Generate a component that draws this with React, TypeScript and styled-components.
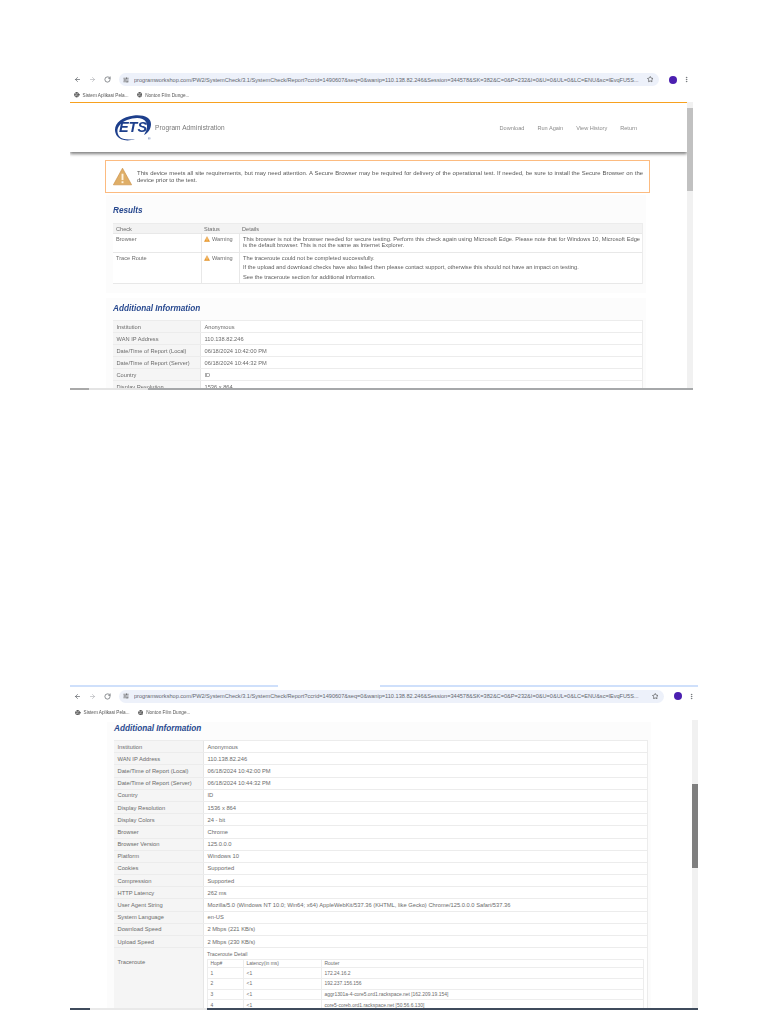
import styled, {createGlobalStyle} from "styled-components";
import {ArrowLeft, ArrowRight, EllipsisVertical, Globe, RotateCw, SlidersHorizontal, Star} from "lucide-react";

const GlobalStyle = createGlobalStyle`
    html, body {
        margin: 0;
        background: #ffffff;
        font-family: "Liberation Sans", Arial, sans-serif;
    }
`;

const Page = styled.div`
    width: 768px;
    height: 1024px;
    overflow: hidden;
    box-sizing: border-box;
    padding: 71px 0 0 70px;
    display: flex;
    flex-direction: column;
    gap: 295px;
`;

const Shot = styled.section<{$width: number; $height: number}>`
    width: ${(p) => p.$width}px;
    height: ${(p) => p.$height}px;
    display: flex;
    flex-direction: column;
    overflow: hidden;
    filter: blur(0.3px);
`;

const TopGlow = styled.div`
    height: 2px;
    flex: none;
    background: linear-gradient(90deg, #cfe0fb 0 208px, #fff 208px 310px, #cfe0fb 310px);
`;

const Toolbar = styled.div<{$height: number}>`
    height: ${(p) => p.$height}px;
    flex: none;
    display: flex;
    align-items: center;
    padding-left: 4px;
    gap: 8px;
    color: #5f6368;
`;

const UrlBar = styled.div`
    flex: 1;
    height: 13px;
    border-radius: 7px;
    background: #edf1fa;
    display: flex;
    align-items: center;
    padding: 0 6px 0 4px;
    gap: 5px;
    min-width: 0;
`;

const UrlText = styled.span`
    flex: 1;
    font-size: 5.6px;
    color: #63676e;
    white-space: nowrap;
    overflow: hidden;
`;

const Avatar = styled.div`
    width: 8px;
    height: 8px;
    border-radius: 50%;
    background: #4b1fb0;
    flex: none;
    margin-left: 2px;
`;

const Bookmarks = styled.div<{$height: number; $left: number}>`
    height: ${(p) => p.$height}px;
    flex: none;
    display: flex;
    align-items: center;
    gap: 8px;
    padding-left: ${(p) => p.$left}px;
`;

const Bookmark = styled.span`
    display: flex;
    align-items: center;
    gap: 3px;
    font-size: 4.7px;
    color: #555;
`;

const Viewport = styled.div`
    flex: 1;
    min-height: 0;
    display: flex;
`;

const Content = styled.div`
    flex: 1;
    min-width: 0;
    overflow: hidden;
    display: flex;
    flex-direction: column;
`;

const Scrollbar = styled.div<{$before: number; $thumb: number; $color: string}>`
    width: 6px;
    flex: none;
    background: #f1f1f1;
    display: flex;
    flex-direction: column;
    align-items: center;
    &::before {
        content: "";
        height: ${(p) => p.$before}px;
    }
    &::after {
        content: "";
        width: 6px;
        height: ${(p) => p.$thumb}px;
        background: ${(p) => p.$color};
    }
`;

const BottomLine = styled.div<{$dark: boolean}>`
    height: 2px;
    flex: none;
    background: ${(p) => p.$dark
        ? "linear-gradient(90deg, #3f4b5c 0 20px, #e9e9e9 20px 137px, #3f4b5c 137px)"
        : "linear-gradient(90deg, #a9a9a9 0 19px, #e4e4e4 19px 78px, #a6a8aa 78px)"};
`;

const Header = styled.header`
    height: 50px;
    flex: none;
    box-sizing: border-box;
    border-top: 1px solid #f7a11f;
    display: flex;
    align-items: center;
    padding: 0 50px 0 43px;
    box-shadow: 0 2px 3px rgba(0, 0, 0, 0.5);
    position: relative;
`;

const Brand = styled.span`
    font-size: 6.5px;
    color: #777;
    letter-spacing: 0.1px;
    margin-left: 2px;
`;

const Nav = styled.nav`
    margin-left: auto;
    display: flex;
    gap: 13px;
    font-size: 5.6px;
    color: #8b8b8b;
`;

const Alert = styled.div`
    flex: none;
    width: 545px;
    height: 33px;
    box-sizing: border-box;
    margin: 8px 0 0 35px;
    box-shadow: inset 0 0 0 1px #fcbb80;
    display: flex;
    align-items: center;
    padding: 0 7px 0 8px;
    gap: 5px;
    font-size: 5.95px;
    line-height: 7px;
    color: #565656;
    text-align: justify;
`;

const Card = styled.div<{$top: number; $height?: number; $left: number; $width: number}>`
    flex: none;
    margin: ${(p) => p.$top}px 0 0 ${(p) => p.$left}px;
    width: ${(p) => p.$width}px;
    ${(p) => p.$height ? `height: ${p.$height}px;` : ""}
    box-sizing: border-box;
    background: #fcfcfc;
    padding: 0 3px 0 7px;
`;

const SectionTitle = styled.h2<{$height: number; $pad: number}>`
    margin: 0;
    height: ${(p) => p.$height}px;
    box-sizing: border-box;
    padding-bottom: ${(p) => p.$pad}px;
    display: flex;
    align-items: flex-end;
    font-size: 8.2px;
    line-height: 9px;
    font-style: italic;
    font-weight: 700;
    color: #28498f;
`;

const Grid = styled.div`
    color: #6b6b6b;
    border-top: 1px solid #ececec;
    border-right: 1px solid #ececec;
    background: #fff;
`;

const ResultRow = styled.div<{$height: number; $head?: boolean}>`
    display: grid;
    grid-template-columns: 88px 38px 1fr;
    height: ${(p) => p.$height}px;
    box-sizing: border-box;
    font-size: 5.6px;
    border-bottom: 1px solid #e8e8e8;
    background: ${(p) => p.$head ? "#f3f3f3" : "#fff"};
`;

const ResultCell = styled.div<{$line?: boolean}>`
    padding: 1.5px 2px 0 3px;
    line-height: 6.3px;
    ${(p) => p.$line ? "border-left: 1px solid #e8e8e8;" : ""}
`;

const DetailLine = styled.p`
    margin: 0 0 3.6px;
    color: #5d5d5d;
    font-size: 5.72px;
    line-height: 6.2px;
    text-align: justify;
`;

const WarnStatus = styled.span`
    display: flex;
    align-items: center;
    gap: 2px;
    white-space: nowrap;
    margin-left: -1px;
`;

const InfoRow = styled.div<{$height: number; $first: number; $size: number}>`
    display: grid;
    grid-template-columns: ${(p) => p.$first}px 1fr;
    height: ${(p) => p.$height}px;
    box-sizing: border-box;
    font-size: ${(p) => p.$size}px;
    border-bottom: 1px solid #ececec;
`;

const InfoKey = styled.div`
    background: #f5f5f5;
    padding-left: 3.5px;
    display: flex;
    align-items: center;
    border-right: 1px solid #e6e6e6;
    white-space: nowrap;
`;

const InfoValue = styled.div`
    padding-left: 3.5px;
    display: flex;
    align-items: center;
    white-space: nowrap;
`;

const TraceRow = styled.div`
    display: grid;
    grid-template-columns: 90px 1fr;
    height: 70px;
    font-size: 5.78px;
`;

const TraceKey = styled(InfoKey)`
    align-items: flex-start;
    padding-top: 11px;
`;

const TraceBody = styled.div`
    padding-left: 3px;
    font-size: 5.3px;
`;

const TraceTitle = styled.div`
    height: 11px;
    display: flex;
    align-items: center;
`;

const HopTable = styled.div`
    width: 436px;
    border-top: 1px solid #ededed;
    border-right: 1px solid #ededed;
    font-size: 4.95px;
`;

const HopRow = styled.div<{$head?: boolean}>`
    display: grid;
    grid-template-columns: 35px 78px 1fr;
    height: ${(p) => p.$head ? 8 : 10.7}px;
    box-sizing: border-box;
    border-bottom: 1px solid #ededed;
    border-left: 1px solid #ededed;
`;

const HopCell = styled.div`
    display: flex;
    align-items: center;
    padding-left: 2.5px;
    & + & {
        border-left: 1px solid #ededed;
    }
`;

const url1 = "programworkshop.com/PW2/SystemCheck/3.1/SystemCheck/Report?ccrid=1490607&seq=0&wanip=110.138.82.246&Session=344578&SK=382&C=0&P=232&I=0&U=0&UL=0&LC=ENU&sc=lEvqFU5S...";

const infoRows: [string, string][] = [
    ["Institution", "Anonymous"],
    ["WAN IP Address", "110.138.82.246"],
    ["Date/Time of Report (Local)", "06/18/2024 10:42:00 PM"],
    ["Date/Time of Report (Server)", "06/18/2024 10:44:32 PM"],
    ["Country", "ID"],
    ["Display Resolution", "1536 x 864"],
    ["Display Colors", "24 - bit"],
    ["Browser", "Chrome"],
    ["Browser Version", "125.0.0.0"],
    ["Platform", "Windows 10"],
    ["Cookies", "Supported"],
    ["Compression", "Supported"],
    ["HTTP Latency", "262 ms"],
    ["User Agent String", "Mozilla/5.0 (Windows NT 10.0; Win64; x64) AppleWebKit/537.36 (KHTML, like Gecko) Chrome/125.0.0.0 Safari/537.36"],
    ["System Language", "en-US"],
    ["Download Speed", "2 Mbps (221 KB/s)"],
    ["Upload Speed", "2 Mbps (230 KB/s)"],
];

const hops = [
    ["1", "<1", "172.24.16.2"],
    ["2", "<1", "192.237.156.156"],
    ["3", "<1", "aggr1301a-4-core5.ord1.rackspace.net [162.209.19.154]"],
    ["4", "<1", "core5-coreb.ord1.rackspace.net [50.56.6.130]"],
];

function WarnIcon({size, color}: {size: number; color: string}) {
    return (
        <svg width={size} height={size} viewBox="0 0 24 24" style={{flex: "none"}}>
            <path d="M12 1.5 23.5 22.5H.5Z" fill={color} stroke="#c98f45" strokeWidth="0.8" />
            <rect x="10.8" y="8.5" width="2.4" height="8" fill="#fff3dd" />
            <rect x="10.8" y="18" width="2.4" height="2.4" fill="#fff3dd" />
        </svg>
    );
}

function EtsLogo() {
    return (
        <svg width="40" height="28" viewBox="0 0 40 28">
            <path d="M4 22C-2 13 6 3 21 1.500C31 .5 38 4 38 10C38 15 35 19 31 21C34 16 35 12 33 8C30 3 22 3 14 6C6 9 2 16 6 22C9 26 16 26 22 25C14 28 7 26 4 22Z" fill="#1d3f8c" />
            <text x="20" y="18" textAnchor="middle" fontFamily="Liberation Sans" fontSize="14.5" fontWeight="700" fontStyle="italic" fill="#1d3f8c">ETS</text>
            <text x="35" y="26" fontFamily="Liberation Sans" fontSize="3.5" fill="#1d3f8c">®</text>
        </svg>
    );
}

function Chrome() {
    return (
        <>
            <ArrowLeft size={7} strokeWidth={2.4} />
            <ArrowRight size={7} strokeWidth={2} color="#a8abb0" />
            <RotateCw size={7} strokeWidth={2.4} />
            <UrlBar>
                <SlidersHorizontal size={6} strokeWidth={2.2} color="#444" />
                <UrlText>{url1}</UrlText>
                <Star size={6.5} strokeWidth={2.4} color="#444" />
            </UrlBar>
            <Avatar />
            <EllipsisVertical size={7} strokeWidth={2.4} style={{marginLeft: -2, marginRight: 3}} />
        </>
    );
}

function BookmarkBar({height, left}: {height: number; left: number}) {
    return (
        <Bookmarks $height={height} $left={left}>
            <Bookmark><Globe size={5.5} strokeWidth={3} color="#444" />Sistem Aplikasi Pela...</Bookmark>
            <Bookmark><Globe size={5.5} strokeWidth={3} color="#444" />Nonton Film Dunge...</Bookmark>
        </Bookmarks>
    );
}

function InfoTable({rows, first, height, size}: {rows: [string, string][]; first: number; height: number; size: number}) {
    return (
        <>
            {rows.map(([key, value]) => (
                <InfoRow key={key} $height={height} $first={first} $size={size}>
                    <InfoKey>{key}</InfoKey>
                    <InfoValue>{value}</InfoValue>
                </InfoRow>
            ))}
        </>
    );
}

export default function App() {
    return (
        <Page>
            <GlobalStyle />
            <Shot $width={623} $height={319}>
                <Toolbar $height={17}><Chrome /></Toolbar>
                <BookmarkBar height={14} left={4} />
                <Viewport>
                    <Content>
                        <Header>
                            <EtsLogo />
                            <Brand>Program Administration</Brand>
                            <Nav>
                                <span>Download</span>
                                <span>Run Again</span>
                                <span>View History</span>
                                <span>Return</span>
                            </Nav>
                        </Header>
                        <Alert>
                            <WarnIcon size={19} color="#dfae67" />
                            <div>This device meets all site requirements, but may need attention. A Secure Browser may be required for delivery of the operational test. If needed, be sure to install the Secure Browser on the device prior to the test.</div>
                        </Alert>
                        <Card $top={2} $height={98} $left={36} $width={540}>
                            <SectionTitle $height={28} $pad={8}>Results</SectionTitle>
                            <Grid>
                                <ResultRow $height={10} $head>
                                    <ResultCell>Check</ResultCell>
                                    <ResultCell>Status</ResultCell>
                                    <ResultCell>Details</ResultCell>
                                </ResultRow>
                                <ResultRow $height={19}>
                                    <ResultCell>Browser</ResultCell>
                                    <ResultCell $line><WarnStatus><WarnIcon size={6} color="#ee9b2d" />Warning</WarnStatus></ResultCell>
                                    <ResultCell $line>
                                        <DetailLine style={{margin: 0}}>This browser is not the browser needed for secure testing. Perform this check again using Microsoft Edge. Please note that for Windows 10, Microsoft Edge is the default browser. This is not the same as Internet Explorer.</DetailLine>
                                    </ResultCell>
                                </ResultRow>
                                <ResultRow $height={31}>
                                    <ResultCell>Trace Route</ResultCell>
                                    <ResultCell $line><WarnStatus><WarnIcon size={6} color="#ee9b2d" />Warning</WarnStatus></ResultCell>
                                    <ResultCell $line>
                                        <DetailLine>The traceroute could not be completed successfully.</DetailLine>
                                        <DetailLine>If the upload and download checks have also failed then please contact support, otherwise this should not have an impact on testing.</DetailLine>
                                        <DetailLine>See the traceroute section for additional information.</DetailLine>
                                    </ResultCell>
                                </ResultRow>
                            </Grid>
                        </Card>
                        <Card $top={5} $left={36} $width={540}>
                            <SectionTitle $height={22} $pad={7}>Additional Information</SectionTitle>
                            <Grid>
                                <InfoTable rows={infoRows.slice(0, 6)} first={88} height={12.1} size={5.7} />
                            </Grid>
                        </Card>
                    </Content>
                    <Scrollbar $before={6} $thumb={83} $color="#c1c1c1" />
                </Viewport>
                <BottomLine $dark={false} />
            </Shot>
            <Shot $width={628} $height={325}>
                <TopGlow />
                <Toolbar $height={18}><Chrome /></Toolbar>
                <BookmarkBar height={15} left={5} />
                <Viewport>
                    <Content>
                        <Card $top={2} $left={37} $width={544}>
                            <SectionTitle $height={18} $pad={7}>Additional Information</SectionTitle>
                            <Grid>
                                <InfoTable rows={infoRows} first={90} height={12.2} size={5.78} />
                                <TraceRow>
                                    <TraceKey>Traceroute</TraceKey>
                                    <TraceBody>
                                        <TraceTitle>Traceroute Detail</TraceTitle>
                                        <HopTable>
                                            <HopRow $head>
                                                <HopCell>Hop#</HopCell>
                                                <HopCell>Latency(in ms)</HopCell>
                                                <HopCell>Router</HopCell>
                                            </HopRow>
                                            {hops.map((hop) => (
                                                <HopRow key={hop[0]}>
                                                    <HopCell>{hop[0]}</HopCell>
                                                    <HopCell>{hop[1]}</HopCell>
                                                    <HopCell>{hop[2]}</HopCell>
                                                </HopRow>
                                            ))}
                                        </HopTable>
                                    </TraceBody>
                                </TraceRow>
                            </Grid>
                        </Card>
                    </Content>
                    <Scrollbar $before={64} $thumb={84} $color="#7f7f7f" />
                </Viewport>
                <BottomLine $dark />
            </Shot>
        </Page>
    );
}
